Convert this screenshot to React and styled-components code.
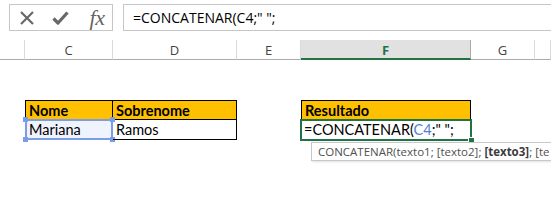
import React from "react";
import styled, { createGlobalStyle } from "styled-components";

const Global = createGlobalStyle`
  html, body { margin: 0; padding: 0; background: #ffffff; }
  body { width: 551px; height: 211px; overflow: hidden; font-family: "Open Sans", "Noto Sans", sans-serif; }
`;

const Page = styled.div`
  position: relative;
  width: 551px;
  height: 211px;
  overflow: hidden;
  background: #fff;
`;

const FormulaBar = styled.div`
  display: flex;
  align-items: flex-start;
  gap: 10px;
  height: 40px;
  padding: 4px 0 0 9px;
  box-sizing: border-box;
`;

const IconBox = styled.div`
  width: 104px;
  height: 27px;
  box-sizing: border-box;
  border: 1px solid #c6c6c6;
  display: flex;
  align-items: center;
  justify-content: space-between;
  padding: 0 4px 0 9px;
`;

const IconButton = styled.span`
  display: flex;
  align-items: center;
  justify-content: center;
  width: ${(p) => p.$w || 16}px;
  height: 20px;
  color: #686868;
`;

const Fx = styled.span`
  font-family: "Liberation Serif", "DejaVu Serif", serif;
  font-style: italic;
  font-size: 22px;
  line-height: 20px;
  color: #646464;
  letter-spacing: -0.5px;
`;

const FormulaInput = styled.div`
  flex: 1;
  height: 27px;
  box-sizing: border-box;
  border: 1px solid #c6c6c6;
  border-right: none;
  display: flex;
  align-items: center;
  padding-left: 9px;
  font-family: "Open Sans", "Noto Sans", sans-serif;
  font-size: 14px;
  color: #000;
  white-space: nowrap;
`;

const Sheet = styled.div`
  display: grid;
  grid-template-columns: 25px 88px 124px 64px 170px 64px 1fr;
  grid-auto-rows: 20px;
`;

const ColHead = styled.div`
  box-sizing: border-box;
  height: 20px;
  border-bottom: ${(p) => (p.$active ? "2px solid #217346" : "1px solid #ababab")};
  border-right: 1px solid ${(p) => (p.$active ? "#ababab" : "#dadada")};
  background: ${(p) => (p.$active ? "#e1e1e1" : "#fff")};
  color: ${(p) => (p.$active ? "#217346" : "#444")};
  font-weight: ${(p) => (p.$active ? 700 : 400)};
  font-family: "Open Sans", "Noto Sans", sans-serif;
  font-size: 13px;
  display: flex;
  align-items: center;
  justify-content: center;
  padding-top: 1px;
`;

const Cell = styled.div`
  position: relative;
  box-sizing: border-box;
  font-family: "Lato", "Liberation Sans", sans-serif;
  font-size: 14.5px;
  line-height: 19px;
  padding: 0 3px;
  white-space: nowrap;
  color: #000;
  grid-column: ${(p) => p.$col};
  grid-row: ${(p) => p.$row};
  background: ${(p) => p.$bg || "transparent"};
  font-weight: ${(p) => (p.$bold ? 700 : 400)};
  ${(p) =>
    p.$table &&
    `
    border-right: 1px solid #000;
    border-bottom: 1px solid #000;
  `}
  ${(p) => p.$top && `border-top: 1px solid #000;`}
  ${(p) => p.$left && `border-left: 1px solid #000;`}
`;

const Selection = styled.div`
  position: absolute;
  inset: -1px -1px -1px -1px;
  border: 2px solid #7d9ce8;
  pointer-events: none;
`;

const Handle = styled.span`
  position: absolute;
  width: 5px;
  height: 5px;
  background: #7d9ce8;
  ${(p) => (p.$v === "top" ? "top: -3px;" : "bottom: -3px;")}
  ${(p) => (p.$h === "left" ? "left: -3px;" : "right: -3px;")}
`;

const ActiveBorder = styled.div`
  position: absolute;
  inset: -1px -1px -1px -1px;
  border: 2px solid #217346;
  pointer-events: none;
`;

const FillHandle = styled.span`
  position: absolute;
  right: -4px;
  bottom: -4px;
  width: 5px;
  height: 5px;
  background: #217346;
  border: 1px solid #fff;
`;

const Ref = styled.span`
  color: #4f7fd8;
`;

const Tooltip = styled.div`
  position: absolute;
  left: 311px;
  top: 142px;
  height: 19px;
  width: 250px;
  box-sizing: border-box;
  border: 1px solid #c8c8c8;
  background: #fff;
  box-shadow: 1px 1px 2px rgba(0, 0, 0, 0.12);
  font-family: "Open Sans", "Noto Sans", sans-serif;
  font-size: 11.5px;
  line-height: 17px;
  color: #505050;
  padding-left: 6px;
  white-space: nowrap;
  overflow: hidden;
`;

const Strong = styled.b`
  font-weight: 700;
  color: #3c3c3c;
`;

export default function App() {
  const cols = ["", "C", "D", "E", "F", "G", ""];
  return (
    <>
      <Global />
      <Page>
        <FormulaBar>
          <IconBox>
            <IconButton $w={16}>
              <svg width="16" height="14" viewBox="0 0 16 14">
                <path d="M2 1 L14 13 M14 1 L2 13" stroke="#686868" strokeWidth="2.2" fill="none" />
              </svg>
            </IconButton>
            <IconButton $w={17}>
              <svg width="17" height="14" viewBox="0 0 17 14">
                <path d="M1.5 7.5 L6 12 L15.5 1.5" stroke="#686868" strokeWidth="3.2" fill="none" strokeLinejoin="round" />
              </svg>
            </IconButton>
            <IconButton $w={22}>
              <Fx>fx</Fx>
            </IconButton>
          </IconBox>
          <FormulaInput>=CONCATENAR(C4;" ";</FormulaInput>
        </FormulaBar>
        <Sheet>
          {cols.map((c, i) => (
            <ColHead key={i} $active={c === "F"}>
              {c}
            </ColHead>
          ))}
          <Cell $col={2} $row={4} $table $top $left $bold $bg="#ffc000">Nome</Cell>
          <Cell $col={3} $row={4} $table $top $bold $bg="#ffc000">Sobrenome</Cell>
          <Cell $col={2} $row={5} $table $left $bg="#eef3fd">
            Mariana
            <Selection />
            <Handle $v="top" $h="left" />
            <Handle $v="top" $h="right" />
            <Handle $v="bottom" $h="left" />
            <Handle $v="bottom" $h="right" />
          </Cell>
          <Cell $col={3} $row={5} $table>Ramos</Cell>
          <Cell $col={5} $row={4} $table $top $left $bold $bg="#ffc000">Resultado</Cell>
          <Cell $col={5} $row={5}>
            =CONCATENAR(<Ref>C4</Ref>;" ";
            <ActiveBorder />
            <FillHandle />
          </Cell>
        </Sheet>
        <Tooltip>
          CONCATENAR(texto1; [texto2]; <Strong>[texto3]</Strong>; [te
        </Tooltip>
      </Page>
    </>
  );
}
